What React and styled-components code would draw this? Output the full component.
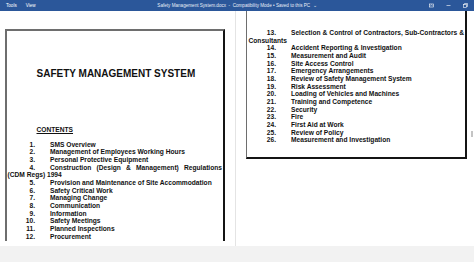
import styled, { createGlobalStyle } from "styled-components";

const GlobalStyle = createGlobalStyle`
    html, body {
        margin: 0;
        padding: 0;
        background: #f2f2f2;
    }
    * {
        box-sizing: border-box;
    }
`

const itensEsquerda = [
    ["1.", "SMS Overview"],
    ["2.", "Management of Employees Working Hours"],
    ["3.", "Personal Protective Equipment"],
    ["4.", "Construction (Design & Management) Regulations (CDM Regs) 1994"],
    ["5.", "Provision and Maintenance of Site Accommodation"],
    ["6.", "Safety Critical Work"],
    ["7.", "Managing Change"],
    ["8.", "Communication"],
    ["9.", "Information"],
    ["10.", "Safety Meetings"],
    ["11.", "Planned Inspections"],
    ["12.", "Procurement"],
];

const itensDireita = [
    ["13.", "Selection & Control of Contractors, Sub-Contractors & Consultants"],
    ["14.", "Accident Reporting & Investigation"],
    ["15.", "Measurement and Audit"],
    ["16.", "Site Access Control"],
    ["17.", "Emergency Arrangements"],
    ["18.", "Review of Safety Management System"],
    ["19.", "Risk Assessment"],
    ["20.", "Loading of Vehicles and Machines"],
    ["21.", "Training and Competence"],
    ["22.", "Security"],
    ["23.", "Fire"],
    ["24.", "First Aid at Work"],
    ["25.", "Review of Policy"],
    ["26.", "Measurement and Investigation"],
];

function Item({ num, texto }) {
    return (
        <Linha>
            <Numero>{num}</Numero>
            {texto}
        </Linha>
    )
}

export default function App() {
    return (
        <Janela>
            <GlobalStyle />
            <BarraTitulo>
                <Menu>
                    <span>Tools</span>
                    <span>View</span>
                </Menu>
                <Titulo>Safety Management System.docx &nbsp;-&nbsp; Compatibility Mode • Saved to this PC &nbsp;⌄</Titulo>
                <Controles>
                    <svg width="5" height="5" viewBox="0 0 10 10">
                        <rect x="1" y="2" width="8" height="6" fill="none" stroke="#fff" strokeWidth="1.2" />
                        <path d="M3 5 L5 3.5 L7 5" fill="none" stroke="#fff" strokeWidth="1.2" />
                    </svg>
                    <svg width="5" height="5" viewBox="0 0 10 10">
                        <path d="M1 5 H9" stroke="#fff" strokeWidth="1.2" />
                    </svg>
                    <svg width="5" height="5" viewBox="0 0 10 10">
                        <rect x="1" y="3" width="6" height="6" fill="none" stroke="#fff" strokeWidth="1.2" />
                        <path d="M3 3 V1 H9 V7 H7" fill="none" stroke="#fff" strokeWidth="1.2" />
                    </svg>
                </Controles>
            </BarraTitulo>

            <AreaDocumento>
                <Pagina largura="235px">
                    <MolduraEsquerda>
                        <TituloDoc>SAFETY MANAGEMENT SYSTEM</TituloDoc>
                        <Conteudo>CONTENTS</Conteudo>
                        <Lista>
                            {itensEsquerda.map(([n, t]) => <Item key={n} num={n} texto={t} />)}
                        </Lista>
                    </MolduraEsquerda>
                </Pagina>
                <Separador />
                <Pagina largura="238px">
                    <MolduraDireita>
                        {itensDireita.map(([n, t]) => <Item key={n} num={n} texto={t} />)}
                    </MolduraDireita>
                </Pagina>
            </AreaDocumento>

            <BarraRolagem />
        </Janela>
    )
}

const Janela = styled.div`
    width: 474px;
    height: 262px;
    position: relative;
    overflow: hidden;
    display: flex;
    flex-direction: column;
    background-color: #f2f2f2;
    font-family: "Liberation Sans", Arial, sans-serif;
`

const BarraTitulo = styled.div`
    height: 11px;
    flex-shrink: 0;
    background-color: #2b579a;
    color: #ffffff;
    display: flex;
    align-items: center;
    justify-content: space-between;
    padding: 0 6px;
    font-size: 4.6px;
`

const Menu = styled.div`
    display: flex;
    gap: 9px;
    width: 90px;
`

const Titulo = styled.div`
    white-space: nowrap;
    color: #e8eef7;
`

const Controles = styled.div`
    display: flex;
    align-items: center;
    justify-content: flex-end;
    gap: 12px;
    width: 90px;
    svg {
        display: block;
    }
`

const AreaDocumento = styled.div`
    display: flex;
    align-items: flex-start;
`

const Pagina = styled.div`
    width: ${(p) => p.largura};
    height: 235px;
    background-color: #ffffff;
    flex-shrink: 0;
`

const Separador = styled.div`
    width: 1px;
    height: 235px;
    background-color: #e4e4e4;
`

const MolduraEsquerda = styled.div`
    margin: 18px 0 0 5px;
    width: 220px;
    height: 212px;
    border-left: 2px solid #6e6e6e;
    border-top: 2px solid #6e6e6e;
    border-right: 2px solid #141414;
    padding: 0 1px 0 0.5px;
    overflow: hidden;
`

const MolduraDireita = styled.div`
    margin-left: 10px;
    width: 221px;
    border-left: 1.5px solid #6e6e6e;
    border-right: 2px solid #141414;
    border-bottom: 2px solid #141414;
    padding: 18px 1px 13.5px 1.5px;
`

const TituloDoc = styled.h1`
    margin: 37px 0 0 29px;
    font-size: 10px;
    line-height: 12px;
    font-weight: 700;
    color: #111111;
`

const Conteudo = styled.h2`
    margin: 46px 0 0 29px;
    font-size: 6.65px;
    line-height: 7.65px;
    font-weight: 700;
    text-decoration: underline;
    color: #111111;
`

const Lista = styled.div`
    margin-top: 7px;
`

const Linha = styled.p`
    margin: 0;
    font-size: 6.65px;
    line-height: 7.65px;
    font-weight: 700;
    color: #111111;
    text-align: justify;
`

const Numero = styled.span`
    display: inline-block;
    width: 27.5px;
    margin-right: 15px;
    text-align: right;
`

const BarraRolagem = styled.div`
    position: absolute;
    right: 1px;
    top: 131px;
    width: 2px;
    height: 6px;
    background-color: #c4c4c4;
`
